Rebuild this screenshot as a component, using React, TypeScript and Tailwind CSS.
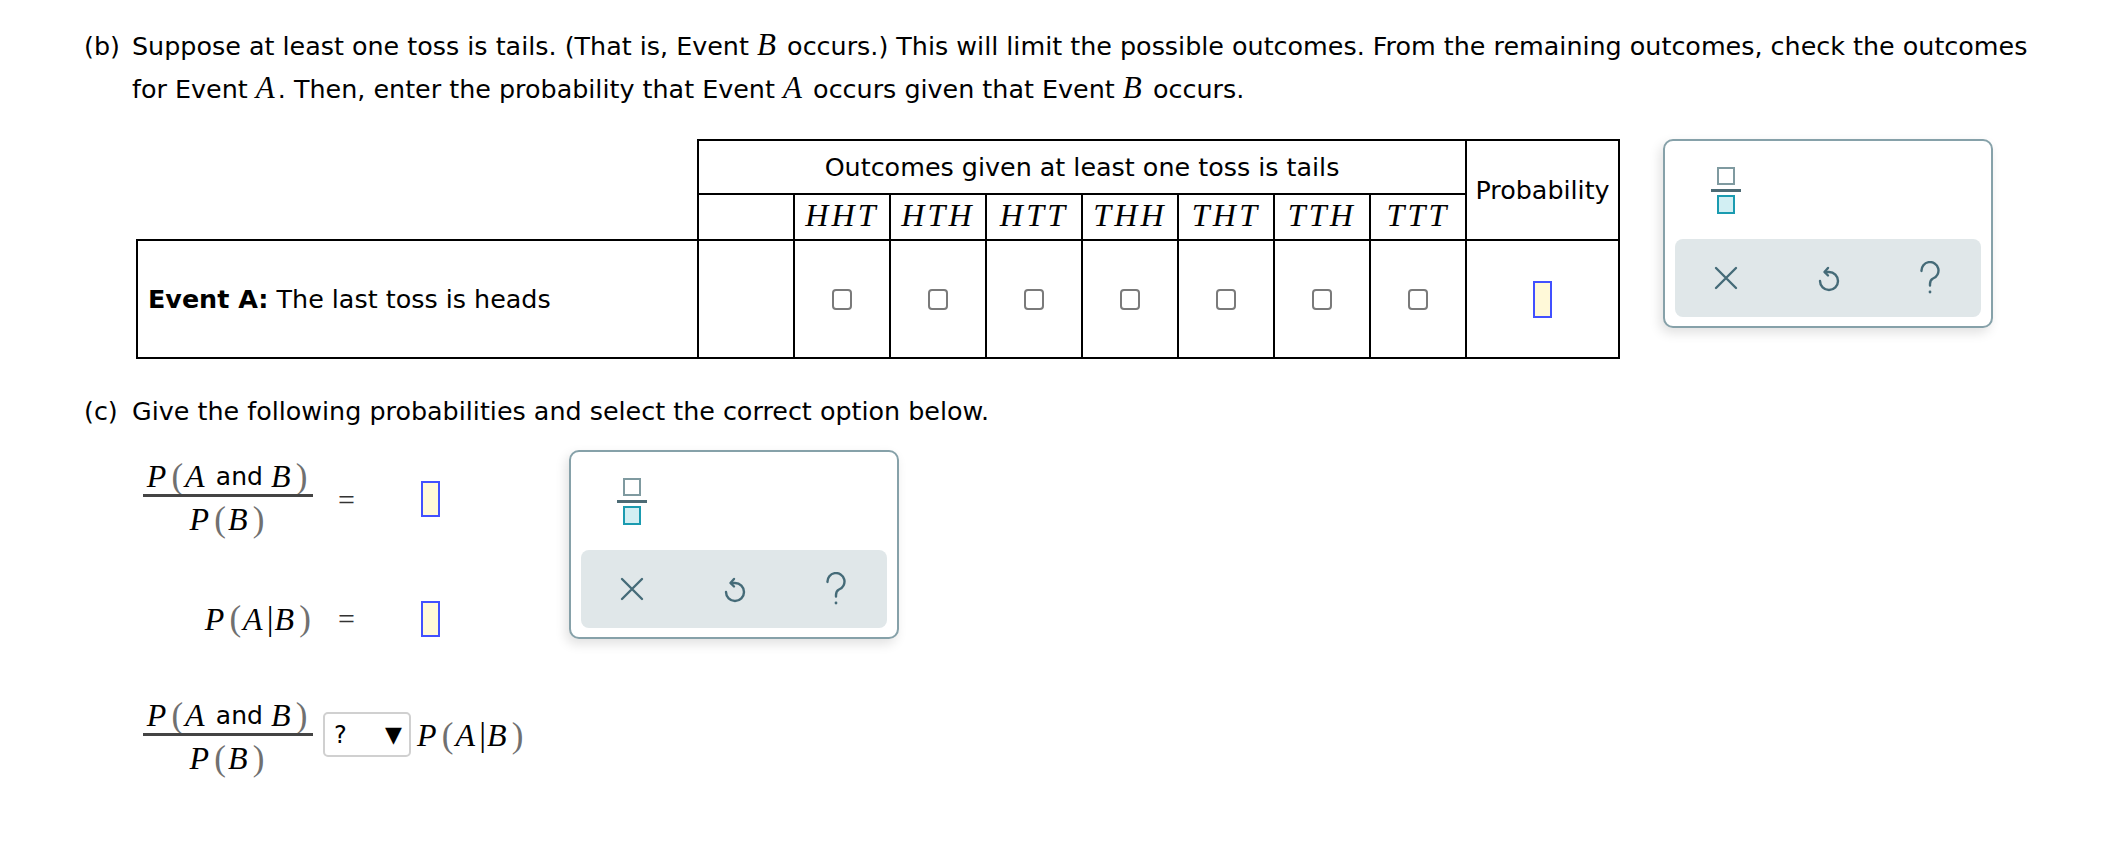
import React from 'react';

const outcomes = ['HHT', 'HTH', 'HTT', 'THH', 'THT', 'TTH', 'TTT'];

// math italic letters, roughly like the MathJax rendering
const Var = ({ children, size = 'text-[32px]' }: { children: React.ReactNode; size?: string }) => (
  <span className={`font-['Liberation_Serif',serif] italic leading-none tracking-[0.1em] ${size}`}>{children}</span>
);

const Paren = ({ children }: { children: React.ReactNode }) => (
  <span className="font-['Liberation_Serif',serif] text-[35px] leading-none not-italic text-[#707070] mx-[2px]">
    {children}
  </span>
);

const Prob = ({ children }: { children: React.ReactNode }) => (
  <span className="inline-flex h-[36px] items-center whitespace-nowrap">
    <Var>P</Var>
    <Paren>(</Paren>
    {children}
    <Paren>)</Paren>
  </span>
);

const AandB = () => (
  <Prob>
    <Var>A</Var>
    <span className="mx-[8px] text-[25px] leading-none">and</span>
    <Var>B</Var>
  </Prob>
);

const AgivenB = () => (
  <Prob>
    <Var>A</Var>
    <span className="font-['Liberation_Serif',serif] text-[34px] leading-none mx-[1px]">|</span>
    <Var>B</Var>
  </Prob>
);

const Fraction = () => (
  <div className="flex w-[170px] flex-col items-center">
    <AandB />
    <div className="h-[3px] w-full bg-[#444]" />
    <div className="pt-[4px]">
      <Prob>
        <Var>B</Var>
      </Prob>
    </div>
  </div>
);

const AnswerBox = ({ h = 'h-[36px]' }: { h?: string }) => (
  <div className={`w-[19px] ${h} border-2 border-[#4150ff] bg-[#fff9d8]`} />
);

const CheckBox = () => <div className="mx-auto h-[21px] w-[20px] rounded-[4px] border-2 border-[#7a7a7a] bg-white" />;

const FractionIcon = () => (
  <div className="flex flex-col items-center">
    <div className="h-[18px] w-[18px] border-2 border-[#7f9aa0] bg-white" />
    <div className="mt-[4px] h-[3px] w-[30px] bg-[#4d6b75]" />
    <div className="mt-[3px] h-[19px] w-[18px] border-2 border-[#1a9bb0] bg-[#d2eff3]" />
  </div>
);

const iconStroke = '#456b78';

const XIcon = () => (
  <svg width="24" height="24" viewBox="0 0 24 24" fill="none" stroke={iconStroke} strokeWidth="2.4" strokeLinecap="round">
    <path d="M2 2L22 22M22 2L2 22" />
  </svg>
);

const UndoIcon = () => (
  <svg width="26" height="32" viewBox="0 0 26 32" fill="none" stroke={iconStroke} strokeWidth="2.4" strokeLinecap="round" strokeLinejoin="round">
    <path d="M5 19 A9 9 0 1 0 14 10 H10" />
    <path d="M13 6 L9.5 10 L13 13.5" />
  </svg>
);

const HelpIcon = () => (
  <svg width="24" height="34" viewBox="0 0 24 34" fill="none" stroke={iconStroke} strokeWidth="2.4" strokeLinecap="round">
    <path d="M3.5 10 A8.5 8.5 0 1 1 15 17.5 C12.8 18.6 12 20.5 12 23 V24.5" />
    <circle cx="12" cy="31" r="1.4" fill={iconStroke} stroke="none" />
  </svg>
);

const Palette = () => (
  <div className="w-[330px] shrink-0 rounded-[10px] border-2 border-[#86a1a9] bg-white px-[10px] pb-[9px] shadow-[-3px_5px_12px_rgba(0,0,0,0.12)]">
    <div className="grid h-[98px] grid-cols-3 items-center">
      <div className="flex justify-center">
        <FractionIcon />
      </div>
    </div>
    <div className="grid h-[78px] grid-cols-3 items-center rounded-[8px] bg-[#e0e7e9]">
      <div className="flex justify-center">
        <XIcon />
      </div>
      <div className="flex justify-center">
        <UndoIcon />
      </div>
      <div className="flex justify-center">
        <HelpIcon />
      </div>
    </div>
  </div>
);

const cell = 'border-2 border-black p-0 text-center align-middle';

export default function App() {
  return (
    <div className="min-h-screen bg-white pl-[84px] pt-[25px] font-['DejaVu_Sans',sans-serif] text-[25.4px] text-black">
      {/* part (b) */}
      <div className="flex leading-[43px]">
        <span className="w-[48px] shrink-0">(b)</span>
        <p>
          Suppose at least one toss is tails. (That is, Event <Var size="text-[31px]">B</Var> occurs.) This will limit the
          possible outcomes. From the remaining outcomes, check the outcomes
          <br />
          for Event <Var size="text-[31px]">A</Var>. Then, enter the probability that Event <Var size="text-[31px]">A</Var>{' '}
          occurs given that Event <Var size="text-[31px]">B</Var> occurs.
        </p>
      </div>

      <div className="ml-[52px] mt-[28px] flex items-start gap-[43px]">
        <table className="w-[1482px] table-fixed border-collapse">
          <colgroup>
            <col className="w-[561px]" />
            <col className="w-[96px]" />
            {outcomes.map((o) => (
              <col key={o} className="w-[96px]" />
            ))}
            <col className="w-[153px]" />
          </colgroup>
          <tbody>
            <tr className="h-[54px]">
              <td className="p-0" />
              <td colSpan={8} className={cell}>
                Outcomes given at least one toss is tails
              </td>
              <td rowSpan={2} className={cell}>
                Probability
              </td>
            </tr>
            <tr className="h-[46px]">
              <td className="p-0" />
              <td className={cell} />
              {outcomes.map((o) => (
                <td key={o} className={cell}>
                  <Var>{o}</Var>
                </td>
              ))}
            </tr>
            <tr className="h-[118px]">
              <td className="border-2 border-black p-0 pl-[10px] text-left align-middle">
                <b>Event A:</b> The last toss is heads
              </td>
              <td className={cell} />
              {outcomes.map((o) => (
                <td key={o} className={cell}>
                  <CheckBox />
                </td>
              ))}
              <td className={cell}>
                <div className="flex justify-center">
                  <AnswerBox h="h-[37px]" />
                </div>
              </td>
            </tr>
          </tbody>
        </table>
        <Palette />
      </div>

      {/* part (c) */}
      <div className="mt-[31px] flex leading-[43px]">
        <span className="w-[48px] shrink-0">(c)</span>
        <p>Give the following probabilities and select the correct option below.</p>
      </div>

      <div className="mt-[17px] flex items-start">
        <div className="mt-[8px] flex w-[485px] flex-col gap-[56px]">
          <div className="flex items-center pl-[59px]">
            <Fraction />
            <span className="ml-[25px] font-['Liberation_Serif',serif] text-[30px] text-[#333]">=</span>
            <div className="ml-[66px]">
              <AnswerBox />
            </div>
          </div>
          <div className="flex items-center pl-[59px]">
            <div className="flex w-[170px] justify-end">
              <AgivenB />
            </div>
            <span className="ml-[25px] font-['Liberation_Serif',serif] text-[30px] text-[#333]">=</span>
            <div className="ml-[66px]">
              <AnswerBox />
            </div>
          </div>
        </div>
        <Palette />
      </div>

      <div className="mt-[56px] flex items-start pl-[59px]">
        <Fraction />
        <div className="ml-[10px] mt-[15px] flex h-[45px] w-[88px] items-center justify-between rounded-[5px] border-2 border-[#d0d0d0] pl-[9px] pr-[7px]">
          <span className="text-[24px]">?</span>
          <span className="text-[22px] leading-none">▼</span>
        </div>
        <div className="ml-[6px] mt-[20px]">
          <AgivenB />
        </div>
      </div>
    </div>
  );
}
